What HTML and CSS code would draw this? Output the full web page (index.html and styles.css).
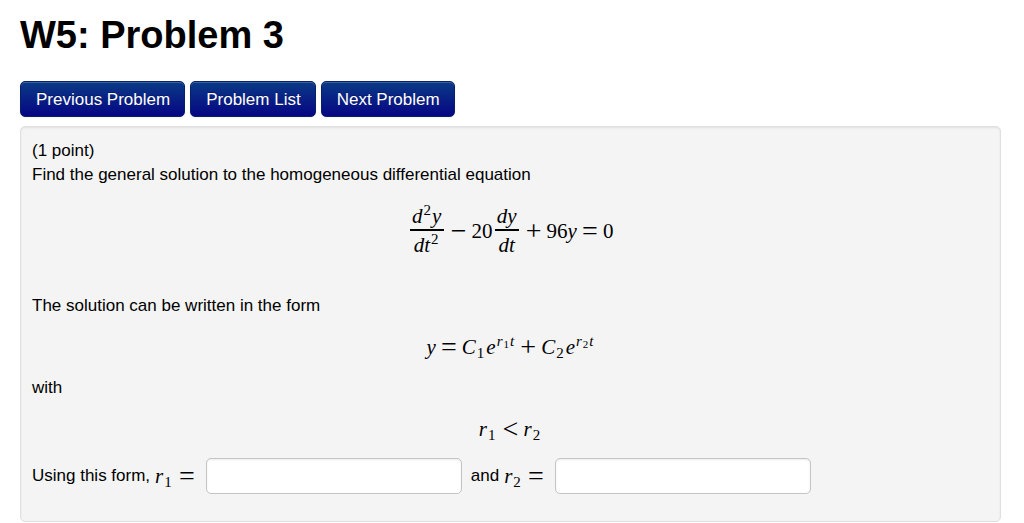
FILE: index.html
```html
<!DOCTYPE html>
<html lang="en">
<head>
<meta charset="utf-8">
<title>W5: Problem 3</title>
<link rel="stylesheet" href="styles.css">
</head>
<body>
<h1 class="title">W5: Problem 3</h1>
<nav class="nav">
  <a class="btn" href="#previous">Previous Problem</a>
  <a class="btn" href="#list">Problem List</a>
  <a class="btn" href="#next">Next Problem</a>
</nav>
<main class="problem">
  <p class="text">(1 point)<br>Find the general solution to the homogeneous differential equation</p>
  <div class="math display tall">
    <span class="frac"><span class="num"><i>d</i><sup>2</sup><i>y</i></span><span class="den"><i>dt</i><sup>2</sup></span></span>
    <span class="op">−</span>
    <span>20</span>
    <span class="frac narrow"><span class="num"><i>dy</i></span><span class="den"><i>dt</i></span></span>
    <span class="op">+</span>
    <span>96<i>y</i></span>
    <span class="op">=</span>
    <span>0</span>
  </div>
  <p class="text">The solution can be written in the form</p>
  <div class="math display">
    <i>y</i>
    <span class="op">=</span>
    <span><i>C</i><sub>1</sub><i>e</i><sup><i>r</i><small>1</small><i>t</i></sup></span>
    <span class="op">+</span>
    <span><i>C</i><sub>2</sub><i>e</i><sup><i>r</i><small>2</small><i>t</i></sup></span>
  </div>
  <p class="text">with</p>
  <div class="math display">
    <span><i>r</i><sub>1</sub></span>
    <span class="op">&lt;</span>
    <span><i>r</i><sub>2</sub></span>
  </div>
  <form class="answers">
    <label class="label" for="r1">Using this form, <span class="math"><span><i>r</i><sub>1</sub></span><span class="op">=</span></span></label>
    <input class="answer" id="r1" type="text">
    <label class="label" for="r2">and <span class="math"><span><i>r</i><sub>2</sub></span><span class="op">=</span></span></label>
    <input class="answer" id="r2" type="text">
  </form>
</main>
</body>
</html>
```

FILE: styles.css
```css
* {
  box-sizing: border-box;
}

body {
  margin: 0;
  padding: 10px 23px 1px 20px;
  background: #fff;
  color: #000;
  font: 17px/24px "Liberation Sans", Arial, sans-serif;
}

.title {
  margin: 0 0 21px;
  font-size: 38px;
  line-height: 50px;
}

.nav {
  display: flex;
  gap: 5px;
  margin-bottom: 9px;
}

.btn {
  padding: 6px 14px 4px 15px;
  border: 1px solid #06206a;
  border-radius: 5px;
  background: linear-gradient(#0a3a86, #060683);
  box-shadow: inset 0 1px 0 rgba(255, 255, 255, 0.2), 0 1px 2px rgba(0, 0, 0, 0.05);
  color: #fff;
  text-decoration: none;
  text-shadow: 0 -1px 0 rgba(0, 0, 0, 0.25);
}

.problem {
  padding: 12px 11px 27px;
  border: 1px solid #e0e0e0;
  border-radius: 5px;
  background: #f4f4f4;
  box-shadow: inset 0 1px 2px rgba(0, 0, 0, 0.08);
}

.text {
  margin: 0;
}

.math {
  display: inline-flex;
  align-items: center;
  font: 21px/24px "Liberation Serif", "Times New Roman", serif;
}

.display {
  display: flex;
  justify-content: center;
  margin: 17px 0;
}

.tall {
  margin-bottom: 37px;
}

.op {
  width: 16px;
  margin: 0 5px;
  font-size: 28px;
  line-height: 20px;
  text-align: center;
}

.math sub,
.math sup {
  font-size: 15px;
  line-height: 0;
}

.math sub {
  margin: 0 2px 0 1px;
  vertical-align: -4px;
}

.math sup {
  margin: 0 1px;
  vertical-align: 8px;
}

.math small {
  margin: 0 1px;
  font-size: 11px;
  vertical-align: -2px;
}

.frac {
  display: flex;
  flex-direction: column;
  align-items: center;
  min-width: 34px;
  margin: 0 2px;
}

.narrow {
  min-width: 24px;
}

.num {
  align-self: stretch;
  padding-bottom: 1px;
  border-bottom: 2px solid #000;
  text-align: center;
}

.den {
  padding-top: 2px;
}

.answers {
  display: flex;
  align-items: center;
  gap: 9px;
}

.label {
  display: flex;
  align-items: center;
  gap: 5px;
  white-space: nowrap;
}

.label .op {
  margin-right: 2px;
}

.answer {
  flex: 0 1 256px;
  min-width: 80px;
  height: 36px;
  padding: 4px 7px;
  border: 1px solid #c4c4c4;
  border-radius: 5px;
  background: #fff;
  box-shadow: inset 0 1px 2px rgba(0, 0, 0, 0.08);
  font: inherit;
}
```
